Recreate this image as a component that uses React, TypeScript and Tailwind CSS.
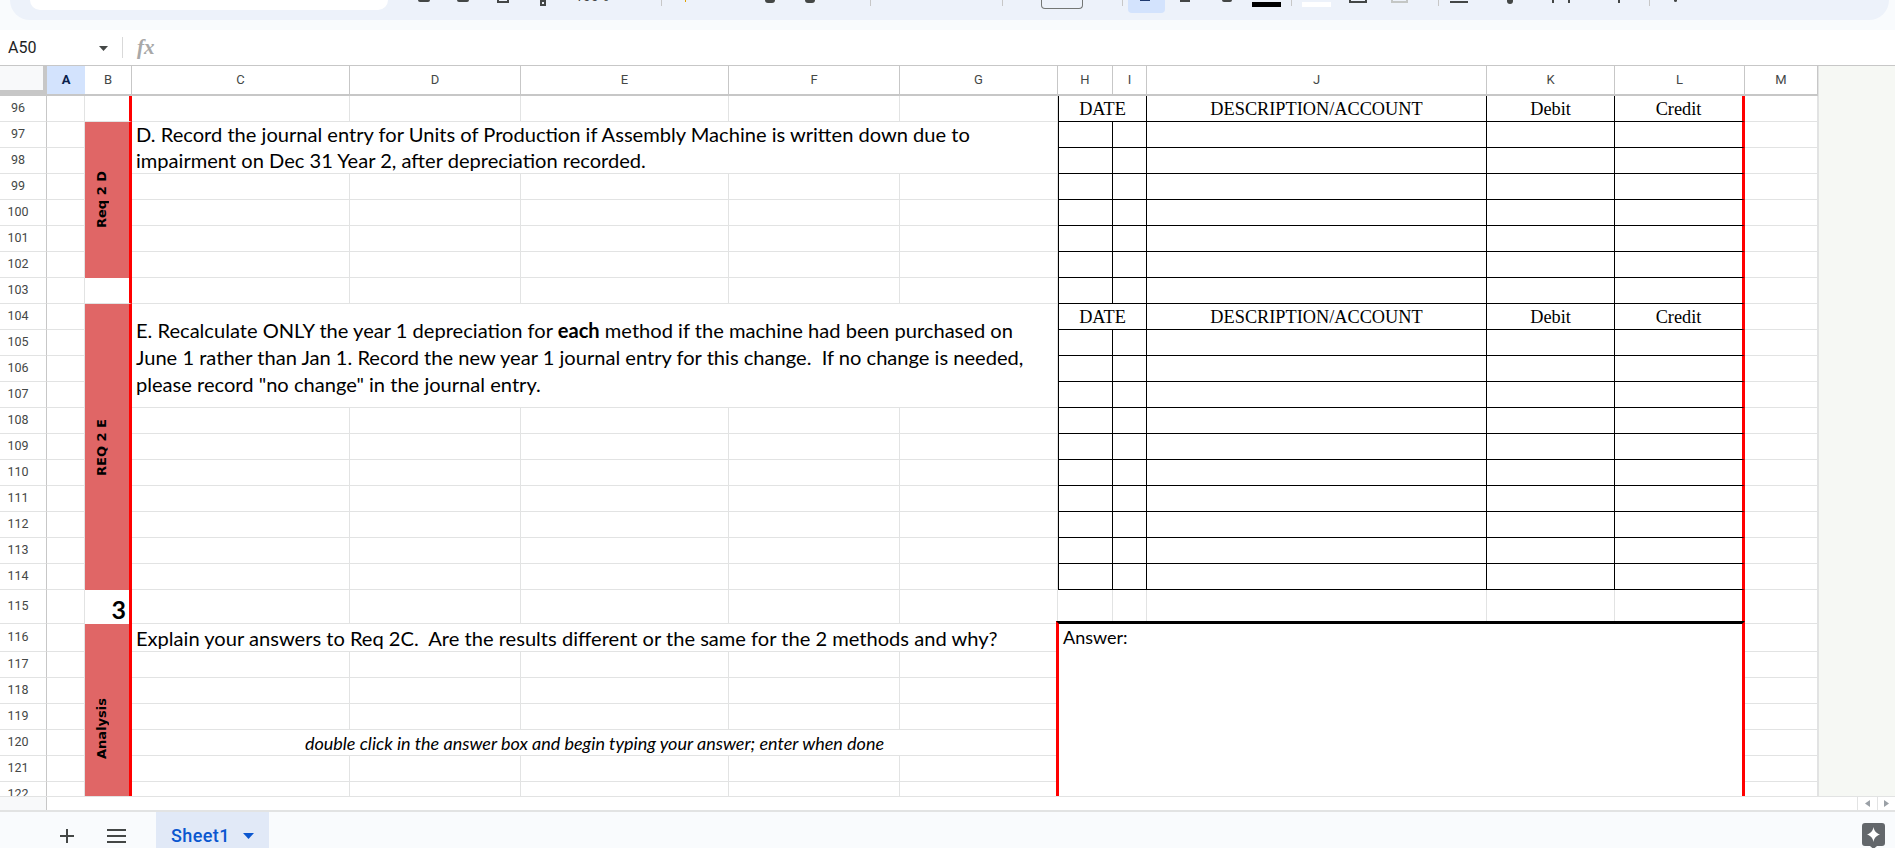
import type { ReactNode } from "react";

const rowNums = Array.from({ length: 27 }, (_, i) => 96 + i);
const letters = ["B", "C", "D", "E", "F", "G", "H", "I", "J", "K", "L", "M"];

const lato = "font-['Lato','Noto_Sans',sans-serif] text-black";
const serif = "font-['Liberation_Serif',serif] text-[18.3px] text-black";
const grid = "border-r border-b border-[#e2e3e3] bg-white";
const black = "border-r border-b border-black bg-white";
const redRight = "border-r-[3px] border-r-[#ff0000]";

function Blank() {
  return (
    <>
      <div className={grid} />
      <div className={grid} />
      <div className={grid} />
      <div className={grid} />
      <div className={grid} />
    </>
  );
}

function Ledger({ header }: { header: boolean }) {
  if (header) {
    return (
      <>
        <div className={`${black} ${serif} col-span-2 border-l flex items-end justify-center leading-[24px]`}>DATE</div>
        <div className={`${black} ${serif} flex items-end justify-center leading-[24px]`}>DESCRIPTION/ACCOUNT</div>
        <div className={`${black} ${serif} flex items-end justify-center leading-[24px]`}>Debit</div>
        <div className={`${black} ${serif} ${redRight} border-b-black flex items-end justify-center leading-[24px]`}>Credit</div>
      </>
    );
  }
  return (
    <>
      <div className={`${black} border-l`} />
      <div className={black} />
      <div className={black} />
      <div className={black} />
      <div className={`${black} ${redRight}`} />
    </>
  );
}

function SideLabel({ children, className }: { children: ReactNode; className: string }) {
  return (
    <div className={`${redRight} bg-[#e06666] flex items-center justify-center ${className}`}>
      <span className="[writing-mode:vertical-rl] rotate-180 font-['DejaVu_Sans',sans-serif] font-bold text-[13px] leading-none text-black whitespace-nowrap">
        {children}
      </span>
    </div>
  );
}

function Row({ n }: { n: number }) {
  const ledgerHeader = n === 96 || n === 104;
  return (
    <>
      <div className="border-r border-b border-[#c7c7c7] border-b-[#e2e3e3] bg-white pr-[10px] flex items-center justify-center font-['Roboto',sans-serif] text-[12.5px] text-[#444746]">
        {n}
      </div>
      <div className={grid} />

      {(n === 96 || n === 103) && <div className={`border-b border-[#e2e3e3] bg-white ${redRight}`} />}
      {n === 97 && <SideLabel className="row-span-6 pr-[12px]">Req 2 D</SideLabel>}
      {n === 104 && <SideLabel className="row-span-11 pr-[12px]">REQ 2 E</SideLabel>}
      {n === 115 && (
        <div className={`bg-white ${redRight} flex items-end justify-end pr-[3px] font-['Lato',sans-serif] font-bold text-[25px] leading-[30px] text-black`}>
          3
        </div>
      )}
      {n === 116 && <SideLabel className="row-span-7 pr-[12px] pt-[24px]">Analysis</SideLabel>}

      {n === 97 && (
        <div className={`${grid} ${lato} col-span-5 row-span-2 flex items-center pl-[4px] pb-[2px] text-[20.1px] leading-[26px] whitespace-pre`}>
          <p>
            D. Record the journal entry for Units of Production if Assembly Machine is written down due to
            <br />
            impairment on Dec 31 Year 2, after depreciation recorded.
          </p>
        </div>
      )}
      {n === 104 && (
        <div className={`${grid} ${lato} col-span-5 row-span-4 flex items-center pl-[4px] pt-[4px] text-[20.1px] leading-[27px] whitespace-pre`}>
          <p>
            E. Recalculate ONLY the year 1 depreciation for <b>each</b> method if the machine had been purchased on
            <br />
            {'June 1 rather than Jan 1. Record the new year 1 journal entry for this change.  If no change is needed,'}
            <br />
            please record "no change" in the journal entry.
          </p>
        </div>
      )}
      {n === 116 && (
        <div className={`${grid} ${lato} col-span-5 flex items-center pl-[4px] pt-[2px] text-[20.1px] whitespace-pre`}>
          {'Explain your answers to Req 2C.  Are the results different or the same for the 2 methods and why?'}
        </div>
      )}
      {n === 120 && (
        <div className={`${grid} ${lato} col-span-5 flex items-center justify-center pt-[2px] italic text-[18px] whitespace-pre`}>
          double click in the answer box and begin typing your answer; enter when done
        </div>
      )}
      {(n === 96 || (n >= 99 && n <= 103) || (n >= 108 && n <= 115) || (n >= 117 && n <= 119) || n >= 121) && <Blank />}

      {n <= 114 && <Ledger header={ledgerHeader} />}
      {n === 115 && (
        <>
          <div className={grid} />
          <div className={grid} />
          <div className={grid} />
          <div className={grid} />
          <div className={`${grid} ${redRight}`} />
        </>
      )}
      {n === 116 && (
        <div className={`col-span-5 row-span-7 -ml-[2px] -mt-[3px] z-10 bg-white border-t-[3px] border-t-black border-l-[3px] border-l-[#ff0000] ${redRight} ${lato} pl-[4px] text-[18px] leading-[26px]`}>
          Answer:
        </div>
      )}

      <div className={grid} />
    </>
  );
}

function Toolbar() {
  return (
    <div className="bg-[#f9fbfd] h-[30px] shrink-0 pl-[10px] pr-[6px]">
      <div className="h-[20px] bg-[#edf2fa] rounded-b-[20px] flex items-start overflow-hidden">
        <div className="ml-[20px] w-[358px] h-[10px] bg-white rounded-b-[20px]" />
        <div className="ml-[30px] w-[12px] h-[2px] bg-[#444746] rounded-b-[3px]" />
        <div className="ml-[27px] w-[12px] h-[2px] bg-[#444746] rounded-b-[3px]" />
        <div className="ml-[28px] w-[12px] h-[3px] border-x-2 border-b-2 border-[#444746]" />
        <div className="ml-[31px] w-[6px] h-[6px] border-2 border-[#444746]" />
        <div className="ml-[29px] w-[43px] -mt-[11px] font-['Roboto',sans-serif] text-[14px] leading-[14px] text-[#444746]">100%</div>
        <div className="ml-[43px] w-px h-[6px] bg-[#c7c7c7]" />
        <div className="ml-[23px] w-px h-[2px] bg-[#e0a000]" />
        <div className="ml-[79px] w-[10px] h-[3px] bg-[#444746] rounded-b-[3px]" />
        <div className="ml-[30px] w-[10px] h-[3px] bg-[#444746] rounded-b-[3px]" />
        <div className="ml-[55px] w-px h-[6px] bg-[#c7c7c7]" />
        <div className="ml-[131px] w-px h-[6px] bg-[#c7c7c7]" />
        <div className="ml-[38px] w-[42px] h-[9px] border-x border-b border-[#747775] rounded-b-[4px]" />
        <div className="ml-[39px] w-px h-[6px] bg-[#c7c7c7]" />
        <div className="ml-[5px] w-[37px] h-[13px] bg-[#d3e3fd] rounded-b-[4px] pl-[12px]">
          <div className="w-[10px] h-px bg-[#1f3a70]" />
        </div>
        <div className="ml-[15px] w-[10px] h-[2px] bg-[#444746]" />
        <div className="ml-[32px] w-[10px] h-[2px] bg-[#444746] rounded-b-[4px]" />
        <div className="ml-[20px] mt-[2px] w-[29px] h-[5px] bg-black" />
        <div className="ml-[10px] w-px h-[6px] bg-[#c7c7c7]" />
        <div className="ml-[10px] mt-[2px] w-[29px] h-[5px] bg-white" />
        <div className="ml-[18px] w-[18px] h-[3px] border-x-2 border-b-2 border-[#444746]" />
        <div className="ml-[24px] w-[17px] h-[3px] border-x-2 border-b-2 border-[#c4c7c5]" />
        <div className="ml-[30px] w-px h-[6px] bg-[#c7c7c7]" />
        <div className="ml-[11px] mt-[1px] w-[18px] h-[2px] bg-[#444746]" />
        <div className="ml-[39px] w-[6px] h-[4px] bg-[#444746] rounded-b-[3px]" />
        <div className="ml-[39px] w-[18px] h-[3px] border-x-2 border-[#444746]" />
        <div className="ml-[41px] w-[9px] h-[3px] border-r-2 border-[#444746]" />
        <div className="ml-[29px] w-px h-[6px] bg-[#c7c7c7]" />
        <div className="ml-[24px] w-[3px] h-[2px] bg-[#444746] rounded-b-full" />
      </div>
    </div>
  );
}

function FormulaBar() {
  return (
    <div className="h-[35px] shrink-0 bg-white flex items-center">
      <span className="ml-[8px] w-[91px] font-['Roboto',sans-serif] text-[16px] text-[#1f1f1f]">A50</span>
      <svg width="9" height="5" viewBox="0 0 9 5" className="mt-[1px]">
        <path d="M0 0h9L4.5 5z" fill="#444746" />
      </svg>
      <div className="ml-[14px] w-px h-[21px] bg-[#d9d9d9]" />
      <span className="ml-[14px] font-['Liberation_Serif',serif] italic font-bold text-[21px] text-[#a8a8a8]">fx</span>
    </div>
  );
}

function SheetGrid() {
  return (
    <div className="h-[731px] shrink-0 flex overflow-hidden border-t border-[#c7c7c7]">
      <div className="w-[1818px] shrink-0 grid grid-cols-[47px_38px_47px_218px_171px_208px_171px_158px_55px_34px_340px_128px_130px_73px] grid-rows-[30px_26px_repeat(18,26px)_34px_28px_repeat(6,26px)]">
        <div className="bg-[#f8f9fa] border-r-4 border-b-[6px] border-[#c7c7c7]" />
        <div className="bg-[#d3e3fd] border-b-2 border-[#c7c7c7] flex items-center justify-center font-['Roboto',sans-serif] font-bold text-[13px] text-[#0b1f4b]">
          A
        </div>
        {letters.map((l) => (
          <div
            key={l}
            className="bg-white border-r border-b-2 border-[#c7c7c7] flex items-center justify-center font-['Roboto',sans-serif] text-[13px] text-[#444746]"
          >
            {l}
          </div>
        ))}
        {rowNums.map((n) => (
          <Row key={n} n={n} />
        ))}
      </div>
      <div className="flex-1 bg-[#f6f8f4] border-l border-[#e2e3e3]" />
    </div>
  );
}

function ScrollBand() {
  return (
    <div className="h-[16px] shrink-0 bg-white border-t border-b-2 border-[#e2e3e3] flex">
      <div className="w-[47px] bg-[#f8f9fa] border-r border-[#c7c7c7]" />
      <div className="flex-1" />
      <div className="w-[20px] border-l border-[#e2e3e3] flex items-center justify-center">
        <svg width="5" height="7" viewBox="0 0 5 7">
          <path d="M5 0v7L0 3.5z" fill="#9aa0a6" />
        </svg>
      </div>
      <div className="w-[18px] border-l border-[#e2e3e3] flex items-center justify-center">
        <svg width="5" height="7" viewBox="0 0 5 7">
          <path d="M0 0v7l5-3.5z" fill="#9aa0a6" />
        </svg>
      </div>
    </div>
  );
}

function BottomBar() {
  return (
    <div className="flex-1 bg-[#f9fbfd] flex items-stretch overflow-hidden">
      <svg width="14" height="14" viewBox="0 0 14 14" className="ml-[60px] self-center mt-[11px]">
        <path d="M7 0v14M0 7h14" stroke="#444746" strokeWidth="2" />
      </svg>
      <svg width="19" height="14" viewBox="0 0 19 14" className="ml-[33px] self-center mt-[11px]">
        <path d="M0 1h19M0 7h19M0 13h19" stroke="#444746" strokeWidth="2" />
      </svg>
      <div className="ml-[30px] w-[113px] bg-[#e1e9f7] flex items-center pl-[15px] pt-[11px] gap-[13px]">
        <span className="font-['Roboto',sans-serif] font-medium text-[18px] tracking-[0.4px] text-[#0b57d0]">Sheet1</span>
        <svg width="11" height="6" viewBox="0 0 11 6">
          <path d="M0 0h11L5.500 6z" fill="#0b57d0" />
        </svg>
      </div>
      <div className="flex-1" />
      <svg width="23" height="25" viewBox="0 0 23 25" className="mr-[10px] mt-[11px]">
        <path d="M3 0h17a3 3 0 0 1 3 3v17a3 3 0 0 1-3 3h-5l-3.500 3-3.500-3H3a3 3 0 0 1-3-3V3a3 3 0 0 1 3-3z" fill="#63676b" />
        <path d="M11.500 4c.8 4 2.500 6 6.500 7.500-4 1.500-5.700 3.500-6.500 7.500-.8-4-2.500-6-6.500-7.500 4-1.500 5.700-3.500 6.500-7.500z" fill="#fff" />
      </svg>
    </div>
  );
}

export default function App() {
  return (
    <div className="w-full h-[848px] flex flex-col overflow-hidden bg-white">
      <Toolbar />
      <FormulaBar />
      <SheetGrid />
      <ScrollBand />
      <BottomBar />
    </div>
  );
}
